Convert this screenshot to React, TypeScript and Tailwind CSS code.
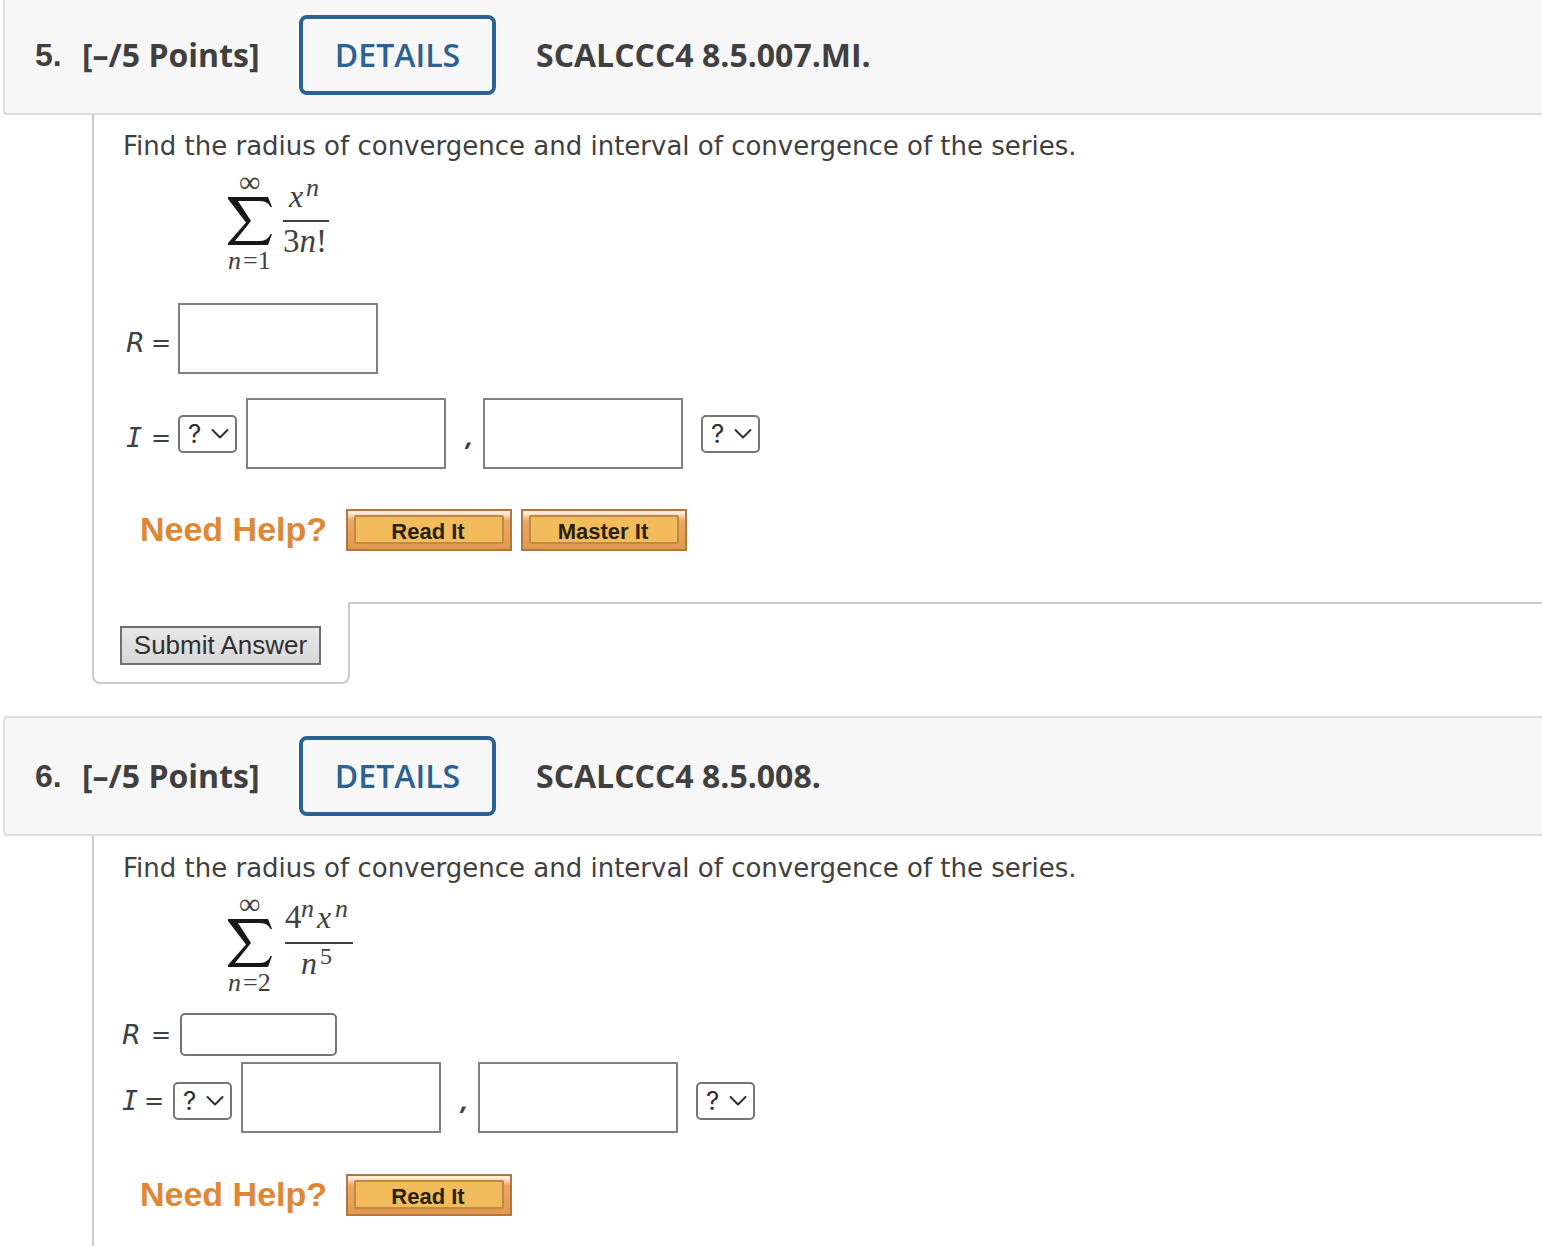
import type { ReactNode } from 'react';

function Header({ num, title }: { num: number; title: string }) {
  return (
    <header className="ml-[3px] h-[120px] flex items-center bg-[#f7f7f7] border-2 border-r-0 border-[#dddddd] rounded-l pl-[30px] font-['Open_Sans'] text-[32px] text-[#404040]">
      <span className="w-[47px] shrink-0 font-['Liberation_Sans'] font-bold">{num}.</span>
      <span className="w-[217px] shrink-0 font-bold whitespace-nowrap">[–/5 Points]</span>
      <button
        type="button"
        className="w-[197px] h-20 shrink-0 border-4 border-[#2b6193] rounded-lg font-semibold text-[#2b6193]"
      >
        DETAILS
      </button>
      <h2 className="ml-10 font-bold whitespace-nowrap">{title}</h2>
    </header>
  );
}

function Box({ label, id }: { label?: string; id?: string }) {
  return (
    <input
      type="text"
      id={id}
      aria-label={label}
      className="w-[200px] h-[71px] shrink-0 border-2 border-[#808080] bg-white px-2"
    />
  );
}

function Bracket({ label }: { label: string }) {
  return (
    <div className="relative w-[59px] h-[38px] shrink-0">
      <select
        aria-label={label}
        className="w-full h-full appearance-none border-2 border-[#767676] rounded-[5px] bg-white pl-2 font-['Inter'] text-[26px] leading-[32px] text-[#303030]"
      >
        <option>?</option>
        <option>(</option>
        <option>[</option>
      </select>
      <svg
        className="absolute right-2 top-[13px] pointer-events-none"
        width="18"
        height="12"
        fill="none"
        stroke="#303030"
        strokeWidth="2"
        strokeLinecap="round"
        strokeLinejoin="round"
      >
        <path d="M1.500 2 9 9.500 16.500 2" />
      </svg>
    </div>
  );
}

function Interval() {
  return (
    <div className="flex items-center">
      <Box label="Left endpoint" />
      <span className="w-[37px] pt-1 pl-5 font-['Open_Sans'] font-bold italic">,</span>
      <Box label="Right endpoint" />
    </div>
  );
}

function Sum({ from, label, children }: { from: string; label: string; children: ReactNode }) {
  return (
    <svg
      role="img"
      aria-label={label}
      width="140"
      height="108"
      viewBox="0 -8 140 108"
      className="mt-[3px] ml-[105px] font-['Liberation_Serif'] text-[32px]"
      fill="#404040"
    >
      <text x="12" y="18" fontSize="30">∞</text>
      <path
        fill="#181818"
        d="M1 23H41L45 33H43.500Q41 27 33 27H11L24 47 8 67H33Q41 67 43.500 60H45L41 71H1V69L19 48.500 1 25Z"
      />
      <text x="1" y="95" fontSize="26" fontStyle="italic">n</text>
      <text x="16" y="95" fontSize="26">={from}</text>
      {children}
    </svg>
  );
}

function HelpButton({ children }: { children: ReactNode }) {
  return (
    <button
      type="button"
      className="w-[166px] h-[42px] border-2 border-[#ad7844] bg-linear-to-b from-[#fdebda] from-5% via-[#eba864] via-25% to-[#e6984a] px-[6px] pt-1 pb-[5px]"
    >
      <span className="flex h-full items-center justify-center rounded-xs border-2 border-[#c08a45] bg-[#f2bc5c] pt-1 pr-0.5 font-['Liberation_Sans'] text-[22px] leading-none font-bold text-[#2a1f08]">
        {children}
      </span>
    </button>
  );
}

function NeedHelp({ items }: { items: string[] }) {
  return (
    <div className="flex items-center gap-[9px] pl-[18px]">
      <strong className="w-[197px] pb-0.5 font-['Liberation_Sans'] text-[34px] leading-10 text-[#de8834]">
        Need Help?
      </strong>
      {items.map((item) => (
        <HelpButton key={item}>{item}</HelpButton>
      ))}
    </div>
  );
}

const bodyClass =
  "ml-[92px] border-l-2 border-[#cccccc] pl-7 font-['DejaVu_Sans'] text-[26px] leading-[34px] text-[#404040]";

function Prompt() {
  return (
    <p className="pl-px">
      Find the radius of convergence and interval of convergence of the series.
    </p>
  );
}

export default function App() {
  return (
    <main className="-mt-[5px] bg-white">
      <section>
        <Header num={5} title="SCALCCC4 8.5.007.MI." />
        <div className={`${bodyClass} pt-[14px]`}>
          <Prompt />
          <Sum from="1" label="Sum from n = 1 to infinity of x^n / 3n!">
            <g>
              <text x="62" y="33" fontStyle="italic">x</text>
              <text x="79" y="22" fontSize="26" fontStyle="italic">n</text>
              <path d="M56 46h46v2H56z" />
              <text x="56" y="78" fontSize="33">
                3<tspan fontStyle="italic">n</tspan>!
              </text>
            </g>
          </Sum>
          <div className="mt-[29px] flex items-center">
            <label htmlFor="radius-5" className="flex pt-2">
              <span className="w-[29px] pl-1 text-[27px] italic">R</span>
              <span className="w-[27px] text-[24px]">=</span>
            </label>
            <Box id="radius-5" />
          </div>
          <div className="mt-6 flex items-center">
            <span className="w-[29px] pt-2 pl-1 font-['DejaVu_Sans_Mono'] text-[27px] italic">I</span>
            <span className="w-[27px] pt-2 text-[24px]">=</span>
            <Bracket label="Left bracket" />
            <div className="mx-[9px]">
              <Interval />
            </div>
            <div className="ml-[9px]">
              <Bracket label="Right bracket" />
            </div>
          </div>
          <div className="mt-10 pb-[51px]">
            <NeedHelp items={['Read It', 'Master It']} />
          </div>
        </div>
        <footer className="ml-[92px] flex">
          <div className="w-[258px] h-[82px] shrink-0 border-2 border-t-0 border-[#cccccc] rounded-b-lg pt-6 pl-[26px]">
            <button
              type="submit"
              className="w-[201px] h-[39px] border-2 border-[#707070] bg-linear-to-b from-[#e8e8e8] to-[#d8d8d8] pb-0.5 font-['Liberation_Sans'] text-[26px] leading-none text-[#303030]"
            >
              Submit Answer
            </button>
          </div>
          <div className="flex-1 border-t-2 border-[#cccccc]" />
        </footer>
      </section>

      <section className="mt-8">
        <Header num={6} title="SCALCCC4 8.5.008." />
        <div className={`${bodyClass} pt-[15px]`}>
          <Prompt />
          <Sum from="2" label="Sum from n = 2 to infinity of 4^n x^n / n^5">
            <g>
              <text x="58" y="32" fontSize="33">4</text>
              <text x="74" y="21" fontSize="26" fontStyle="italic">n</text>
              <text x="90" y="32" fontStyle="italic">x</text>
              <text x="108" y="21" fontSize="26" fontStyle="italic">n</text>
              <path d="M58 46h68v2H58z" />
              <text x="74" y="78" fontStyle="italic">n</text>
              <text x="93" y="68" fontSize="24">5</text>
            </g>
          </Sum>
          <div className="mt-[17px] flex items-center">
            <label htmlFor="radius-6" className="flex">
              <span className="w-[29px] text-[27px] italic">R</span>
              <span className="w-[29px] text-[24px]">=</span>
            </label>
            <input
              id="radius-6"
              type="text"
              className="w-[157px] h-[43px] border-2 border-[#767676] rounded-[5px] px-2"
            />
          </div>
          <div className="mt-[6px] flex items-center">
            <div className="flex items-center pt-[6px]">
              <span className="w-[22px] font-['DejaVu_Sans_Mono'] text-[27px] italic">I</span>
              <span className="w-[29px] text-[24px]">=</span>
              <Bracket label="Left bracket" />
            </div>
            <div className="mx-[9px]">
              <Interval />
            </div>
            <div className="ml-[9px] pt-[6px]">
              <Bracket label="Right bracket" />
            </div>
          </div>
          <div className="mt-[41px] pb-[30px]">
            <NeedHelp items={['Read It']} />
          </div>
        </div>
      </section>
    </main>
  );
}
